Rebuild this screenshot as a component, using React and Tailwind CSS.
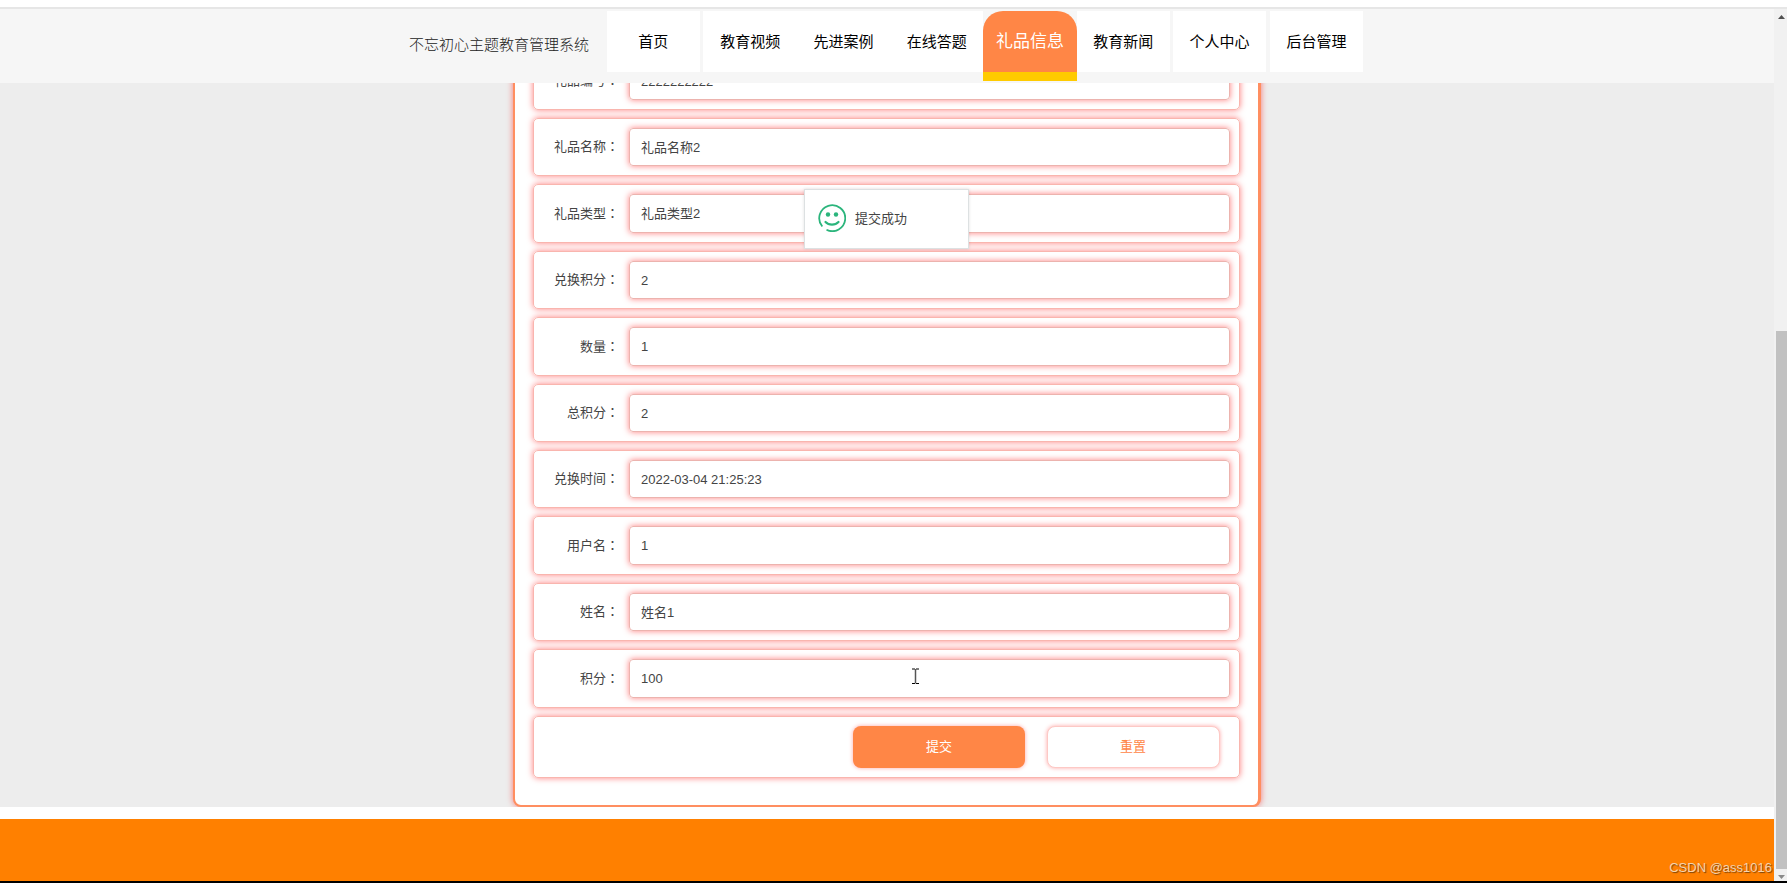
import React from 'react';
import clsx from 'clsx';

const navItems = [
  { label: '首页', gap: 'mr-[3.5px]' },
  { label: '教育视频' },
  { label: '先进案例' },
  { label: '在线答题' },
  { label: '礼品信息', active: true },
  { label: '教育新闻', gap: 'mr-[3px]' },
  { label: '个人中心', gap: 'mr-[3.5px]' },
  { label: '后台管理' },
];

const fields = [
  { label: '礼品编号', value: '2222222222' },
  { label: '礼品名称', value: '礼品名称2' },
  { label: '礼品类型', value: '礼品类型2' },
  { label: '兑换积分', value: '2' },
  { label: '数量', value: '1' },
  { label: '总积分', value: '2' },
  { label: '兑换时间', value: '2022-03-04 21:25:23' },
  { label: '用户名', value: '1' },
  { label: '姓名', value: '姓名1' },
  { label: '积分', value: '100' },
];

const Header = () => (
  <header className="flex h-[74px] shrink-0 bg-[#f6f6f6] pl-[409px]">
    <h1 className="mt-[24px] h-6 w-[197.7px] whitespace-nowrap text-[15px] leading-6 font-light text-[#222]">
      不忘初心主题教育管理系统
    </h1>
    <nav className="flex pt-[2px]">
      {navItems.map((item) => (
        <a
          key={item.label}
          className={clsx(
            'block w-[93.3px] text-center leading-[61px]',
            item.gap,
            item.active
              ? 'h-[70px] rounded-t-[20px] border-b-[9px] border-[#ffcb00] bg-[#ff8646] text-[17px] text-white'
              : 'h-[61px] bg-white text-[15px] text-black'
          )}
        >
          {item.label}
        </a>
      ))}
    </nav>
  </header>
);

const FieldRow = ({ label, value }) => (
  <div className="mb-[8px] flex h-[58.4px] shrink-0 items-center rounded-[5px] border border-[#f9b5ae] pl-[9px] shadow-[0_0_6px_rgba(255,0,0,0.5)]">
    <label className="w-[76px] text-right text-[13px] text-[#444]">
      {label}
      <span lang="zh-TW">：</span>
    </label>
    <div className="ml-[10px] h-[38.4px] w-[601px] rounded-[4px] border border-[#ecb3ae] pl-[11px] text-[13px] leading-[37px] text-[#444] shadow-[0_0_6px_rgba(255,0,0,0.5)]">
      {value}
    </div>
  </div>
);

const Toast = () => (
  <div className="absolute top-[189px] left-[804px] flex h-[60px] w-[165px] items-center border border-[#dde1e2] bg-white pb-[2px] pl-[13px] shadow-[0_0_3px_rgba(0,0,0,0.12)]">
    <svg width="28" height="28" viewBox="0 0 28 28" fill="none" stroke="#2bb57c">
      <path d="M4.300 22.500A13 13 0 1 1 8.500 25.800" strokeWidth="1.8" />
      <circle cx="10" cy="10.5" r="2.2" fill="#2bb57c" stroke="none" />
      <circle cx="18" cy="10.5" r="2.2" fill="#2bb57c" stroke="none" />
      <path d="M7.500 18c3.400 3.600 9.600 3.600 13 0" strokeWidth="2.200" strokeLinecap="round" />
    </svg>
    <span className="ml-[9px] pt-px text-[13px] text-[#444]">提交成功</span>
  </div>
);

const Scrollbar = () => (
  <div className="flex w-[13px] flex-col items-center bg-[#f1f1f1] pl-[2px]">
    <svg width="7" height="4" className="mt-[6px]">
      <path d="M0 4L3.500 0L7 4z" fill="#505050" />
    </svg>
    <div className="mt-[312px] h-[538px] w-full bg-[#c1c1c1]" />
    <svg width="7" height="4" className="mt-[6px]">
      <path d="M0 0L3.500 4L7 0z" fill="#8a8a8a" />
    </svg>
  </div>
);

const App = () => (
  <div
    lang="zh-CN"
    className="relative flex h-[883px] w-[1787px] flex-col overflow-hidden bg-white font-['Liberation_Sans','Noto_Sans_CJK_TC','Noto_Sans_CJK_SC',sans-serif]"
  >
    <div className="h-[9px] shrink-0 border-b-2 border-[#e6e6e6]" />
    <div className="flex h-[872px]">
      <div className="flex w-[1774px] flex-col">
        <Header />
        {/* Scrolled form, the top of it runs under the header */}
        <main className="flex h-[724px] shrink-0 flex-col justify-end overflow-hidden bg-[#ededed] pl-[513px]">
          <section className="flex w-[748px] shrink-0 flex-col rounded-[8px] border-2 border-r-3 border-[#ff8e60] bg-white px-[18px] pt-[20px] pb-[27px] shadow-[0_0_6px_rgba(255,0,0,0.5)]">
            {fields.map((field) => (
              <FieldRow key={field.label} {...field} />
            ))}
            <div className="flex h-[62.5px] shrink-0 items-center justify-end rounded-[5px] border border-[#f9b5ae] pr-[19.5px] shadow-[0_0_6px_rgba(255,0,0,0.5)]">
              <button className="h-[41.5px] w-[172px] rounded-[8px] bg-[#ff8646] text-[13px] text-white shadow-[0_0_4px_rgba(255,0,0,0.35)]">
                提交
              </button>
              <button className="ml-[21.5px] h-[41.5px] w-[173px] rounded-[8px] border border-[#fdc9c5] bg-white text-[13px] text-[#ff8646] shadow-[0_0_4px_rgba(255,0,0,0.35)]">
                重置
              </button>
            </div>
          </section>
        </main>
        <footer className="mt-[12px] flex h-[62px] shrink-0 items-end justify-end bg-[#ff8000] pr-[2px] pb-[4px]">
          <span className="text-[13px] leading-[18px] whitespace-nowrap text-[#f6d3ae] [text-shadow:1px_1px_1px_rgba(90,50,10,0.8)]">
            CSDN @ass1016
          </span>
        </footer>
      </div>
      <Scrollbar />
    </div>
    <div className="h-[2px] shrink-0 bg-black" />

    <Toast />

    {/* Text cursor */}
    <svg width="9" height="17" viewBox="0 0 9 17" className="absolute top-[668px] left-[911px]" fill="none">
      <path d="M1 1h3M5 1h3M1 15.500h3M5 15.500h3" stroke="#000" />
      <path d="M4.500 1v14.500" stroke="#555" strokeWidth="1.500" />
    </svg>
  </div>
);

export default App;
